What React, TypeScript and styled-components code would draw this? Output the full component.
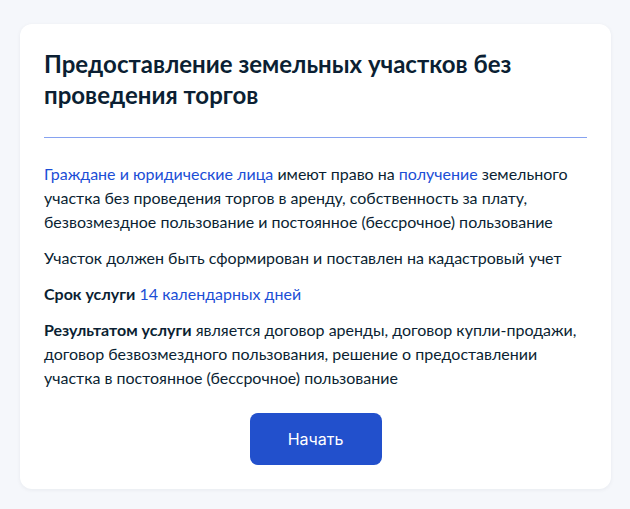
import React from 'react';
import styled, { createGlobalStyle } from 'styled-components';

const GlobalStyle = createGlobalStyle`
  html, body {
    margin: 0;
    padding: 0;
    background: #f5f7fb;
  }

  body {
    font-family: Lato, 'Noto Sans', sans-serif;
    color: #0b1f33;
    -webkit-font-smoothing: antialiased;
  }
`;

const Page = styled.div`
  padding: 24px 19px 21px 20px;
`;

const Card = styled.section`
  background: #ffffff;
  border-radius: 12px;
  box-shadow: 0 1px 4px rgba(11, 31, 51, 0.06);
  padding: 24px;
`;

const Title = styled.h1`
  margin: 0;
  font-size: 24px;
  line-height: 31px;
  font-weight: 700;
`;

const Divider = styled.hr`
  height: 1px;
  margin: 27px 0 24px;
  border: none;
  background: #86a2f0;
`;

const Paragraph = styled.p`
  margin: 0 0 12px;
  font-size: 16px;
  line-height: 24px;
`;

const Link = styled.a`
  color: #1b4ed6;
  text-decoration: none;
  cursor: pointer;
`;

const Strong = styled.b`
  font-weight: 700;
`;

const Actions = styled.div`
  display: flex;
  justify-content: center;
  padding-top: 11px;
`;

const Button = styled.button`
  width: 132px;
  height: 52px;
  border: none;
  border-radius: 8px;
  background: #2250cc;
  color: #ffffff;
  font-family: Inter, Roboto, sans-serif;
  font-size: 16px;
  cursor: pointer;
`;

export default function App() {
  return (
    <>
      <GlobalStyle />
      <Page>
        <Card>
          <Title>Предоставление земельных участков без проведения торгов</Title>
          <Divider />
          <Paragraph>
            <Link>Граждане и юридические лица</Link> имеют право на{' '}
            <Link>получение</Link> земельного участка без проведения торгов в аренду,
            собственность за плату, безвозмездное пользование и постоянное (бессрочное)
            пользование
          </Paragraph>
          <Paragraph>Участок должен быть сформирован и поставлен на кадастровый учет</Paragraph>
          <Paragraph>
            <Strong>Срок услуги</Strong> <Link>14 календарных дней</Link>
          </Paragraph>
          <Paragraph>
            <Strong>Результатом услуги</Strong> является договор аренды, договор
            купли-продажи, договор безвозмездного пользования, решение о предоставлении
            участка в постоянное (бессрочное) пользование
          </Paragraph>
          <Actions>
            <Button>Начать</Button>
          </Actions>
        </Card>
      </Page>
    </>
  );
}
